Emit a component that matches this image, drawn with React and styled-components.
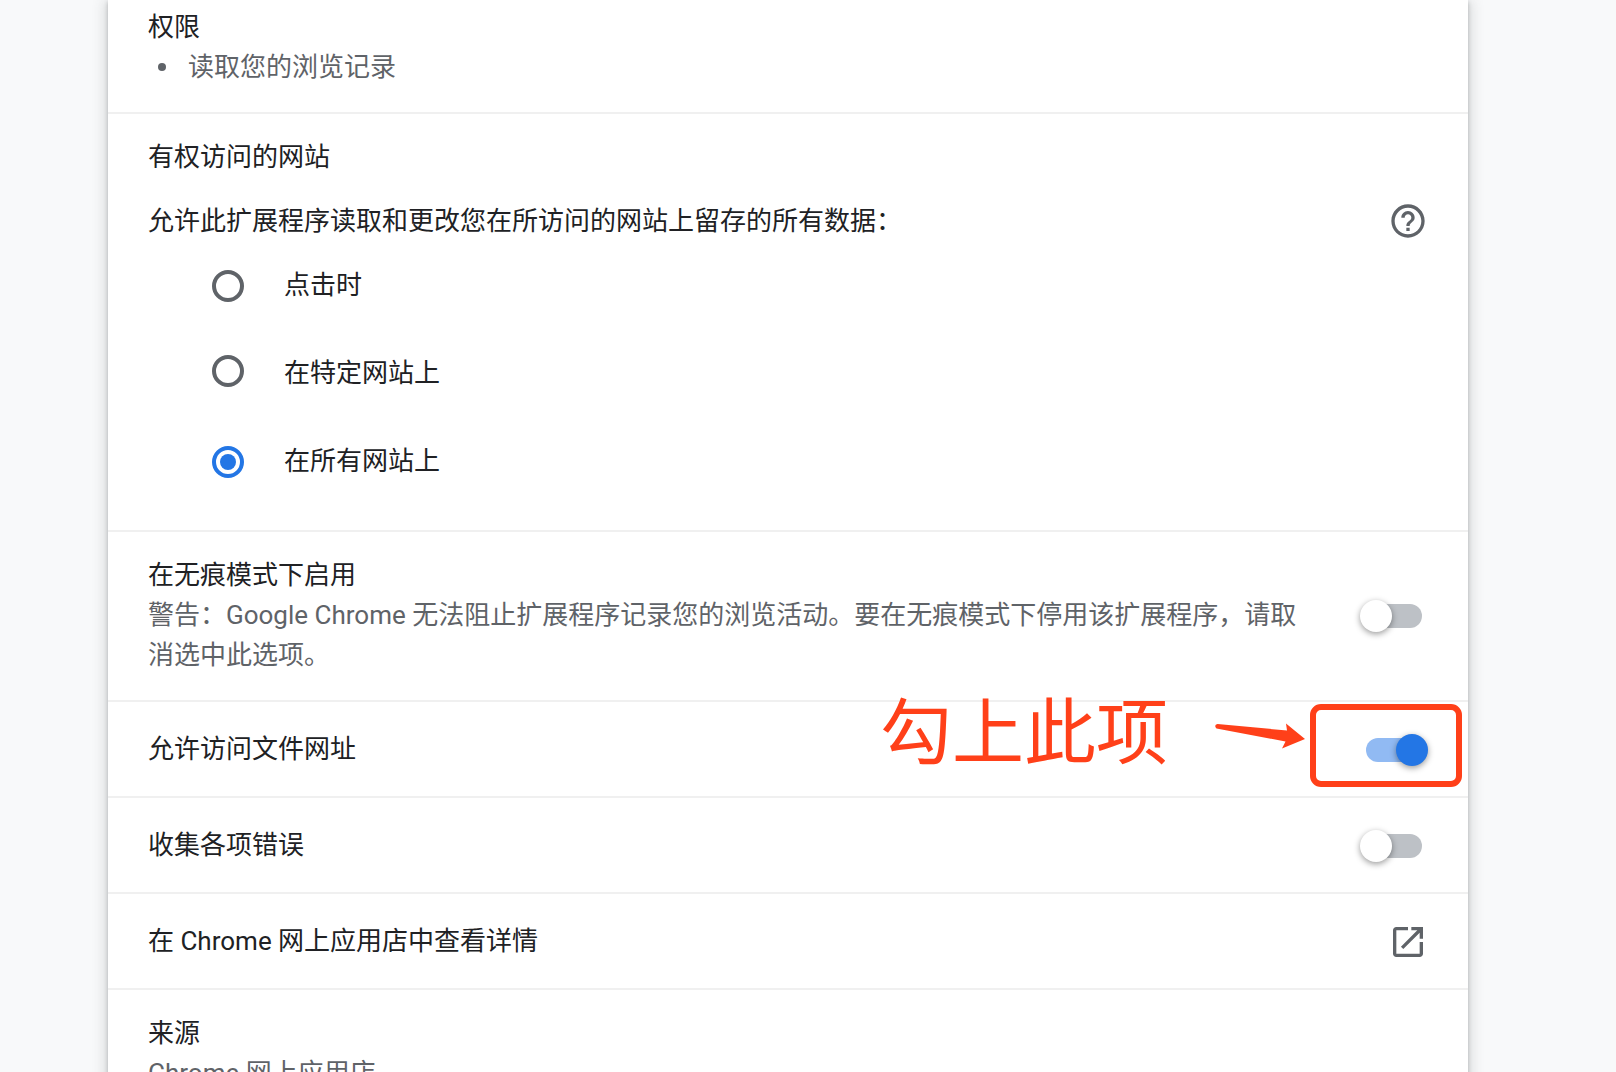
import React, { useState } from "react"
import styled, { createGlobalStyle } from "styled-components"

const colors = {
  page: "#f8f9fa",
  card: "#ffffff",
  primary: "#202124",
  secondary: "#5f6368",
  separator: "#f0f0f0",
  blue: "#2376e5",
  blueLight: "#91baf3",
  grey: "#bdc1c6",
  mark: "#ff4019",
}

const GlobalStyle = createGlobalStyle`
  * {
    box-sizing: border-box;
  }
  body {
    margin: 0;
    background: ${colors.page};
    color: ${colors.primary};
    font-family: Roboto, "Noto Sans CJK SC", sans-serif;
    font-size: 26px;
    line-height: 40px;
  }
`

const Page = styled.div`
  height: 100vh;
  overflow: hidden;
  padding: 0 148px 0 108px;
`
const Card = styled.main`
  min-height: 100%;
  background: ${colors.card};
  box-shadow: 0 2px 4px rgba(60, 64, 67, 0.3),
    0 4px 12px 4px rgba(60, 64, 67, 0.15);
`
const Section = styled.section`
  position: relative;
  padding: ${(props) => props.$padding || "23px 40px 25px"};
  border-top: 2px solid ${colors.separator};

  &:first-child {
    border-top: 0;
  }
`
const Row = styled.div`
  display: flex;
  align-items: center;
  justify-content: space-between;
  gap: 48px;
`
const SingleRow = styled(Row)`
  min-height: 94px;
`
const Title = styled.h2`
  margin: 0;
  font-size: inherit;
  font-weight: 400;
`
const Text = styled.p`
  margin: 0;
`
const SecondaryText = styled.p`
  margin: 0;
  color: ${colors.secondary};
`
const PermissionList = styled.ul`
  margin: 0;
  padding: 0 10px;
  list-style: none;
  color: ${colors.secondary};
`
const Permission = styled.li`
  display: flex;
  align-items: center;
  gap: 22px;

  &::before {
    content: "";
    width: 8px;
    height: 8px;
    border-radius: 50%;
    background: ${colors.secondary};
  }
`
const HostAccess = styled.div`
  margin-top: 24px;
`
const RadioGroup = styled.div`
  display: flex;
  flex-direction: column;
  gap: 48px;
  padding: 24px 64px;
`
const RadioRow = styled.label`
  display: flex;
  align-items: ${(props) => (props.$top ? "flex-start" : "center")};
  gap: 40px;
`
const Radio = styled.input`
  appearance: none;
  width: 32px;
  height: 32px;
  margin: 2px 0 0;
  border: 4px solid ${colors.secondary};
  border-radius: 50%;

  &:checked {
    border-color: ${colors.blue};
    background: ${colors.blue};
    background-clip: content-box;
    padding: 4px;
  }
`
const Switch = styled.input`
  appearance: none;
  flex: none;
  display: flex;
  align-items: center;
  width: 68px;
  height: 32px;
  margin: 2px 0 0;
  cursor: pointer;

  &::before {
    content: "";
    width: 56px;
    height: 24px;
    margin-left: 6px;
    border-radius: 12px;
    background: ${colors.grey};
  }
  &::after {
    content: "";
    width: 32px;
    height: 32px;
    margin-left: -62px;
    border-radius: 50%;
    background: ${colors.card};
    box-shadow: 0 2px 6px rgba(0, 0, 0, 0.4);
  }
  &:checked::before {
    background: ${colors.blueLight};
  }
  &:checked::after {
    margin-left: -26px;
    background: ${colors.blue};
  }
`
const Icon = styled.svg`
  flex: none;
  width: 40px;
  height: 40px;
  fill: ${colors.secondary};
`
const IconButton = styled.button`
  flex: none;
  display: flex;
  padding: 0;
  border: 0;
  background: none;
  cursor: pointer;
`
const StoreLink = styled.a`
  display: flex;
  align-items: center;
  justify-content: space-between;
  min-height: 94px;
  color: inherit;
  text-decoration: none;

  ${Icon} {
    margin-top: 2px;
  }
`

// hand-drawn note that sits over the file access switch
const Note = styled.div`
  position: absolute;
  top: -8px;
  right: 6px;
  display: flex;
  align-items: flex-start;
  color: ${colors.mark};
  pointer-events: none;
`
const NoteText = styled.span`
  font-size: 72px;
  line-height: 80px;
`
const NoteArrow = styled.svg`
  width: 92px;
  height: 28px;
  margin: 27px 4px 0 46px;
  fill: ${colors.mark};
`
const NoteFrame = styled.span`
  width: 152px;
  height: 83px;
  margin-top: 10px;
  border: 6px solid ${colors.mark};
  border-radius: 11px;
`

const hostOptions = [
  { value: "click", label: "点击时" },
  { value: "specific", label: "在特定网站上", top: true },
  { value: "all", label: "在所有网站上" },
]

const Toggle = ({ id, initial = false }) => {
  const [on, setOn] = useState(initial)

  return (
    <Switch
      type="checkbox"
      role="switch"
      id={id}
      checked={on}
      onChange={() => setOn(!on)}
    />
  )
}

const App = () => {
  const [host, setHost] = useState("all")

  return (
    <>
      <GlobalStyle />
      <Page>
        <Card>
          <Section $padding="7px 40px 25px">
            <Title>权限</Title>
            <PermissionList>
              <Permission>读取您的浏览记录</Permission>
            </PermissionList>
          </Section>

          <Section>
            <Title>有权访问的网站</Title>
            <HostAccess>
              <Row>
                <Text id="host-label">
                  允许此扩展程序读取和更改您在所访问的网站上留存的所有数据：
                </Text>
                <IconButton type="button" aria-label="了解详情">
                  <Icon viewBox="0 0 24 24">
                    <path d="M11 18h2v-2h-2v2zm1-16C6.48 2 2 6.48 2 12s4.48 10 10 10 10-4.48 10-10S17.52 2 12 2zm0 18c-4.41 0-8-3.59-8-8s3.59-8 8-8 8 3.59 8 8-3.59 8-8 8zm0-14c-2.21 0-4 1.79-4 4h2c0-1.1.9-2 2-2s2 .9 2 2c0 2-3 1.75-3 5h2c0-2.25 3-2.5 3-5 0-2.21-1.79-4-4-4z" />
                  </Icon>
                </IconButton>
              </Row>
              <RadioGroup role="radiogroup" aria-labelledby="host-label">
                {hostOptions.map(({ value, label, top }) => (
                  <RadioRow key={value} $top={top}>
                    <Radio
                      type="radio"
                      name="host"
                      value={value}
                      checked={host === value}
                      onChange={() => setHost(value)}
                    />
                    {label}
                  </RadioRow>
                ))}
              </RadioGroup>
            </HostAccess>
          </Section>

          <Section>
            <Row>
              <label htmlFor="incognito">
                <Text as="span">在无痕模式下启用</Text>
                <SecondaryText as="div">
                  警告：Google Chrome
                  无法阻止扩展程序记录您的浏览活动。要在无痕模式下停用该扩展程序，请取消选中此选项。
                </SecondaryText>
              </label>
              <Toggle id="incognito" />
            </Row>
          </Section>

          <Section $padding="0 40px">
            <SingleRow>
              <label htmlFor="file-access">允许访问文件网址</label>
              <Toggle id="file-access" initial />
            </SingleRow>
            <Note>
              <NoteText>勾上此项</NoteText>
              <NoteArrow viewBox="0 0 92 28">
                <path d="M3.5 3 L73 9.5 L72 2.5 L91 18 L68 27.5 L71.5 20.5 L2.5 7.5 Q-0.5 4 3.5 3Z" />
              </NoteArrow>
              <NoteFrame />
            </Note>
          </Section>

          <Section $padding="0 40px">
            <SingleRow>
              <label htmlFor="collect-errors">收集各项错误</label>
              <Toggle id="collect-errors" />
            </SingleRow>
          </Section>

          <Section $padding="0 40px">
            <StoreLink href="#store">
              在 Chrome 网上应用店中查看详情
              <Icon viewBox="0 0 24 24">
                <path d="M19 19H5V5h7V3H5c-1.11 0-2 .9-2 2v14c0 1.1.89 2 2 2h14c1.1 0 2-.9 2-2v-7h-2v7zM14 3v2h3.59l-9.83 9.83 1.41 1.41L19 6.41V10h2V3h-7z" />
              </Icon>
            </StoreLink>
          </Section>

          <Section>
            <Title>来源</Title>
            <SecondaryText>Chrome 网上应用店</SecondaryText>
          </Section>
        </Card>
      </Page>
    </>
  )
}

export default App
